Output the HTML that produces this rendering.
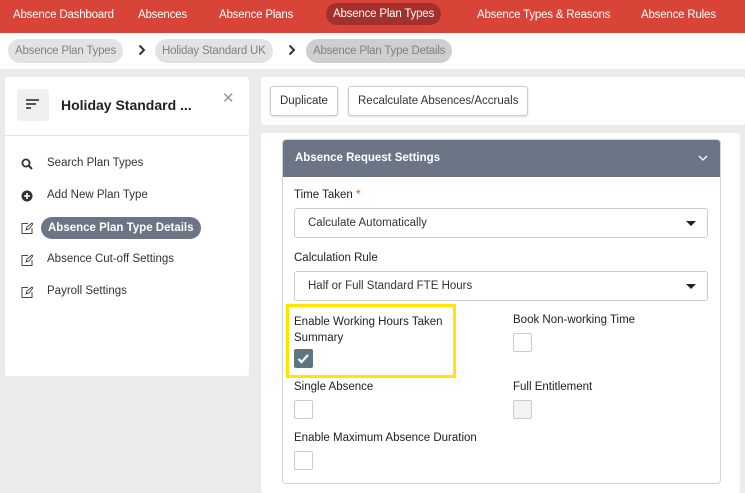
<!DOCTYPE html>
<html><head><style>
*{box-sizing:border-box;margin:0;padding:0}
body{width:745px;height:488px;overflow:hidden;background:#ebebeb;font-family:"Liberation Sans",sans-serif;font-size:11.5px;color:#222;position:relative}
.abs{position:absolute}
.nav{left:0;top:0;width:745px;height:33px;background:#d94438}
.nav span{position:absolute;top:9px;color:#fff;font-size:11.5px;letter-spacing:-0.2px}
.pill{background:#a3302a;border-radius:12px;padding:5px 7px;top:3px!important}
.bc{left:0;top:33px;width:745px;height:36px;background:#fff}
.crumb{position:absolute;top:6px;height:24px;line-height:24px;border-radius:12px;background:#e3e3e3;color:#808080;padding:0 7px;font-size:11.5px;letter-spacing:-0.2px}
.chev{position:absolute;top:11px}
.card{background:#fff;border-radius:3px}
.menu div{position:absolute;left:47px;font-size:11.5px;color:#333}
.ic{position:absolute;left:21px;width:12px;height:12px}
.btn{position:absolute;top:86px;height:30px;line-height:28px;border:1px solid #ccc;border-radius:3px;background:#fff;padding:0 9px;box-shadow:0 1px 2px rgba(0,0,0,.15);font-size:11.5px;color:#333}
.lbl{position:absolute;font-size:11.5px;color:#222}
.sel{position:absolute;left:294px;width:414px;height:30px;border:1px solid #ccc;border-radius:3px;padding-left:13px;line-height:28px;font-size:11.5px;color:#333}
.sel:after{content:"";position:absolute;right:11px;top:12px;border-left:5px solid transparent;border-right:5px solid transparent;border-top:5px solid #222}
.cb{position:absolute;width:19px;height:19px;border:1px solid #ccc;border-radius:2px;background:#fff}
</style></head><body>
<div class="abs nav">
<span style="left:13px">Absence Dashboard</span>
<span style="left:138px">Absences</span>
<span style="left:219px">Absence Plans</span>
<span class="pill" style="left:326px">Absence Plan Types</span>
<span style="left:477px">Absence Types &amp; Reasons</span>
<span style="left:641px">Absence Rules</span>
</div>
<div class="abs bc">
<div class="crumb" style="left:8px">Absence Plan Types</div>
<svg class="chev" style="left:138px" width="8" height="12" viewBox="0 0 8 12"><path d="M1.5 1.5l4.5 4.5-4.5 4.5" fill="none" stroke="#333" stroke-width="2"/></svg>
<div class="crumb" style="left:155px">Holiday Standard UK</div>
<svg class="chev" style="left:288px" width="8" height="12" viewBox="0 0 8 12"><path d="M1.5 1.5l4.5 4.5-4.5 4.5" fill="none" stroke="#333" stroke-width="2"/></svg>
<div class="crumb" style="left:306px;background:#cfcfcf">Absence Plan Type Details</div>
</div>
<div class="abs card" style="left:5px;top:77px;width:244px;height:299px">
<div class="abs" style="left:12px;top:12px;width:32px;height:32px;background:#f0f0f0;border-radius:3px">
<div class="abs" style="left:9px;top:10px;width:13px;height:2px;background:#555"></div>
<div class="abs" style="left:9px;top:14px;width:10px;height:2px;background:#555"></div>
<div class="abs" style="left:9px;top:18px;width:5px;height:2px;background:#555"></div>
</div>
<div class="abs" style="left:56px;top:20px;font-size:14px;font-weight:bold;color:#222">Holiday Standard ...</div>
<div class="abs" style="left:217px;top:12px;font-size:15px;color:#999">&#x2715;</div>
<div class="abs" style="left:0;top:58px;width:244px;height:1px;background:#e3e3e3"></div>
</div>
<div class="menu">
<svg class="ic" style="top:158px" viewBox="0 0 12 12"><circle cx="5" cy="5" r="3.6" fill="none" stroke="#333" stroke-width="1.8"/><path d="M7.5 7.5L11 11" stroke="#333" stroke-width="2"/></svg>
<div style="top:157px">Search Plan Types</div>
<svg class="ic" style="top:190px" viewBox="0 0 12 12"><circle cx="6" cy="6" r="5.5" fill="#333"/><path d="M6 3v6M3 6h6" stroke="#fff" stroke-width="1.6"/></svg>
<div style="top:189px">Add New Plan Type</div>
<svg class="ic" style="top:222px" viewBox="0 0 12 12"><path d="M7 1.5H1v10h10V6" fill="none" stroke="#444"/><path d="M5 8l1-3 5-4 1 1-4 5z" fill="none" stroke="#444"/></svg>
<div style="top:217px;left:41px;background:#6b7585;color:#fff;font-weight:bold;border-radius:11px;padding:5px 7px">Absence Plan Type Details</div>
<svg class="ic" style="top:254px" viewBox="0 0 12 12"><path d="M7 1.5H1v10h10V6" fill="none" stroke="#444"/><path d="M5 8l1-3 5-4 1 1-4 5z" fill="none" stroke="#444"/></svg>
<div style="top:253px">Absence Cut-off Settings</div>
<svg class="ic" style="top:286px" viewBox="0 0 12 12"><path d="M7 1.5H1v10h10V6" fill="none" stroke="#444"/><path d="M5 8l1-3 5-4 1 1-4 5z" fill="none" stroke="#444"/></svg>
<div style="top:285px">Payroll Settings</div>
</div>
<div class="abs card" style="left:261px;top:77px;width:484px;height:48px"></div>
<div class="btn" style="left:270px">Duplicate</div>
<div class="btn" style="left:348px">Recalculate Absences/Accruals</div>
<div class="abs card" style="left:261px;top:133px;width:479px;height:360px"></div>
<div class="abs" style="left:282px;top:139px;width:439px;height:345px;border:1px solid #d4d4d4;border-radius:4px;background:#fff;overflow:hidden">
<div style="height:37px;background:#6b7585;color:#fff;font-weight:bold;padding:12px 0 0 12px">Absence Request Settings</div>
<svg class="abs" style="right:12px;top:14px" width="10" height="8" viewBox="0 0 10 8"><path d="M1 2l4 4 4-4" fill="none" stroke="#fff" stroke-width="1.3"/></svg>
</div>
<div class="lbl" style="left:294px;top:189px">Time Taken <span style="color:#d94438">*</span></div>
<div class="sel" style="top:208px">Calculate Automatically</div>
<div class="lbl" style="left:294px;top:252px">Calculation Rule</div>
<div class="sel" style="top:271px">Half or Full Standard FTE Hours</div>
<div class="abs" style="left:286px;top:304px;width:170px;height:74px;border:3px solid #ffe600"></div>
<div class="lbl" style="left:294px;top:314px;line-height:16px">Enable Working Hours Taken<br>Summary</div>
<div class="cb" style="left:294px;top:349px;background:#607584;border-color:#607584"><svg width="17" height="17" viewBox="0 0 17 17"><path d="M3.5 9l3 3 6.5-7" fill="none" stroke="#fff" stroke-width="2.2"/></svg></div>
<div class="lbl" style="left:513px;top:314px">Book Non-working Time</div>
<div class="cb" style="left:513px;top:333px"></div>
<div class="lbl" style="left:294px;top:381px">Single Absence</div>
<div class="cb" style="left:294px;top:400px"></div>
<div class="lbl" style="left:513px;top:381px">Full Entitlement</div>
<div class="cb" style="left:513px;top:400px;background:#f3f3f3"></div>
<div class="lbl" style="left:294px;top:432px">Enable Maximum Absence Duration</div>
<div class="cb" style="left:294px;top:451px"></div>
</body></html>
